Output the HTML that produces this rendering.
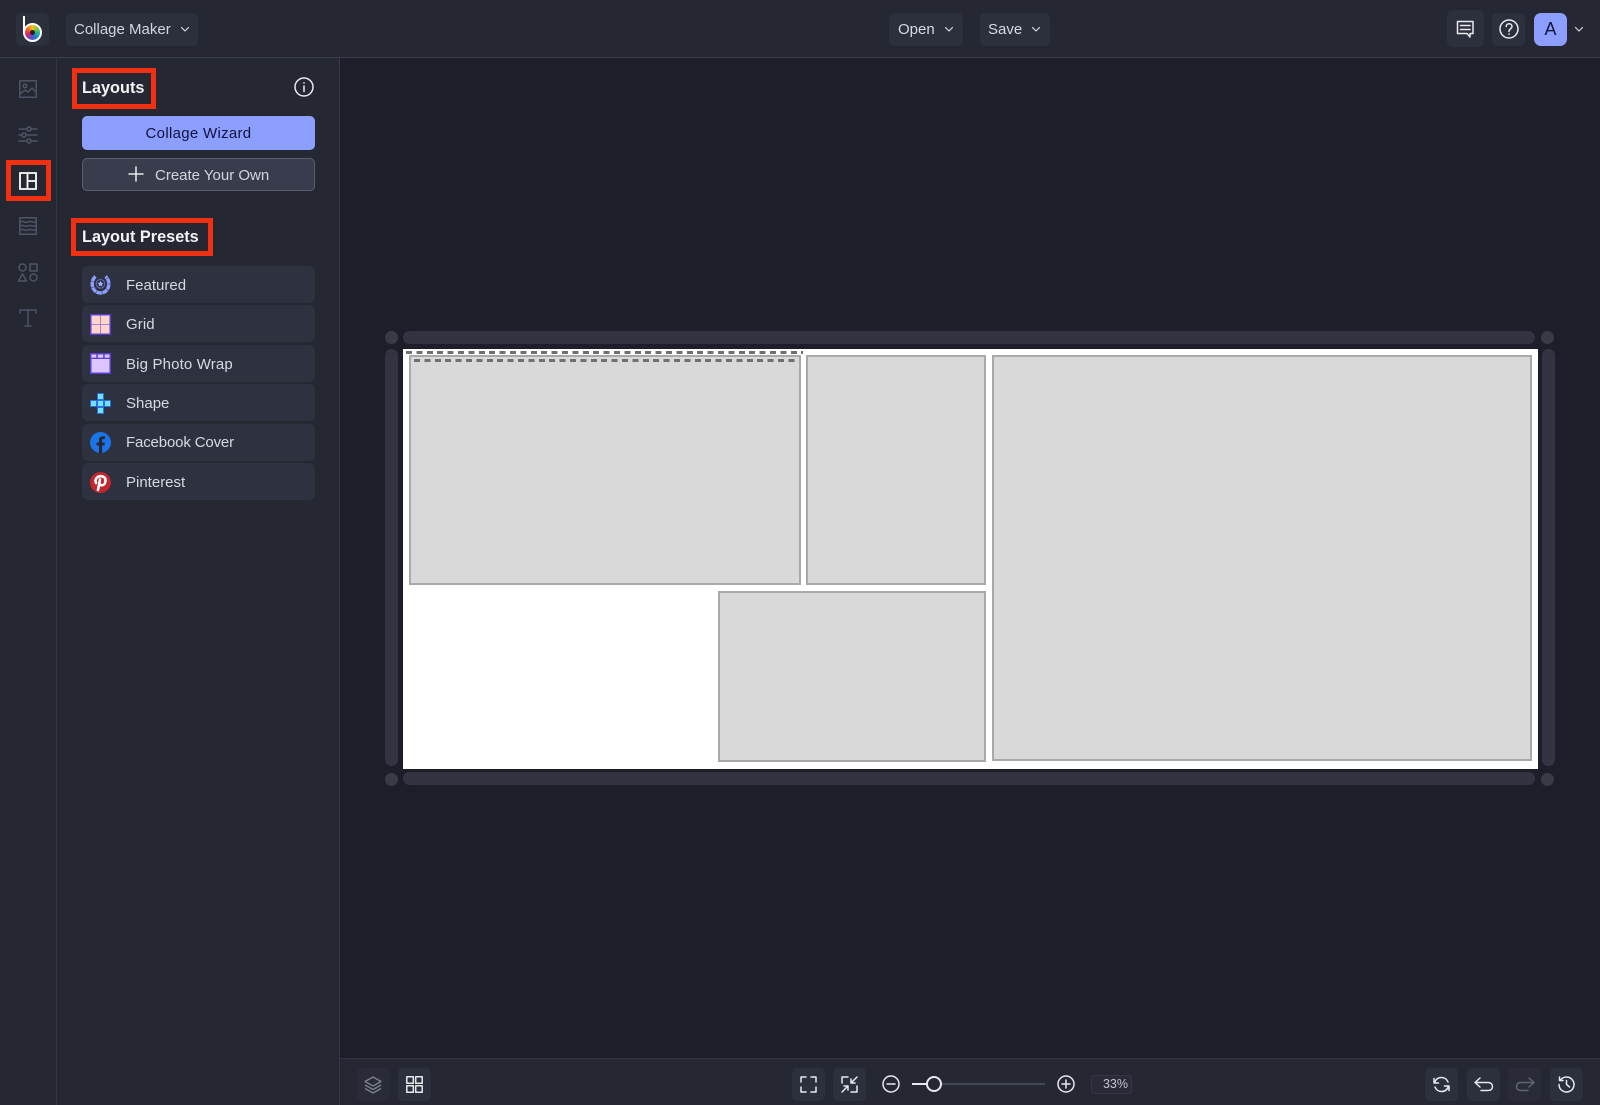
<!DOCTYPE html>
<html lang="en"><head><meta charset="utf-8"><title>Collage Maker</title>
<style>
*{box-sizing:border-box}
html,body{margin:0;padding:0;width:1600px;height:1105px;overflow:hidden;background:#1d1e29;font-family:"Liberation Sans",sans-serif;color:#d7d9e2}
.a{position:absolute}
.btn{position:absolute;background:#2c2f3c;border-radius:5px}
.t{position:absolute;white-space:nowrap;font-size:15px;line-height:20px;margin-top:1px}
.h{position:absolute;white-space:nowrap;font-size:16.3px;font-weight:700;line-height:22px;color:#f2f3f7}
.red{position:absolute;border:5px solid #f03010}
.row{position:absolute;left:82px;width:233px;height:37px;background:#2e313f;border-radius:6px}
.box{position:absolute;background:#d9d9d9;border:2px solid #a9a9a9}
.bar{position:absolute;background:#323541;border-radius:7px}
.dot{position:absolute;width:13px;height:13px;border-radius:50%;background:#383a45}
svg{position:absolute;overflow:visible}
.ic{fill:none;stroke:#4f5366;stroke-width:1.5;stroke-linecap:round;stroke-linejoin:round}
.w{fill:none;stroke:#e8e9ee;stroke-width:1.5;stroke-linecap:round;stroke-linejoin:round}
.ch{fill:none;stroke:#d7d9e2;stroke-width:1.2;stroke-linecap:round;stroke-linejoin:round}
.dash{position:absolute;height:3px;background:repeating-linear-gradient(90deg,#707070 0 6px,transparent 6px 10.4px)}
</style></head><body>

<!-- header -->
<div class="a" style="left:0;top:0;width:1600px;height:58px;background:#252833;border-bottom:1px solid #3a3d4a"></div>
<!-- rail + panel -->
<div class="a" style="left:0;top:58px;width:340px;height:1047px;background:#252833;border-right:1px solid #343743"></div>
<div class="a" style="left:56px;top:58px;width:1px;height:1047px;background:#343743"></div>
<!-- bottom bar -->
<div class="a" style="left:340px;top:1058px;width:1260px;height:47px;background:#252833;border-top:1px solid #343743"></div>

<!-- logo -->
<div class="btn" style="left:16px;top:13px;width:33px;height:33px"></div>
<div class="a" style="left:23px;top:16px;width:2px;height:17px;background:#fff"></div>
<div class="a" style="left:23px;top:23px;width:19px;height:19px;border-radius:50%;background:conic-gradient(#f5c518,#7ac143,#1fa8a0,#2a6fd6,#7b3fb5,#e0245e,#f26a21,#f5c518);border:2px solid #fff"></div>
<div class="a" style="left:30px;top:30px;width:5px;height:5px;border-radius:50%;background:#222"></div>

<div class="btn" style="left:66px;top:13px;width:132px;height:33px"></div>
<div class="t" style="left:74px;top:19px;color:#d3d5de">Collage Maker</div>
<svg style="left:180px;top:26px" width="10" height="7" viewBox="0 0 10 7"><path class="ch" d="M1.500 1.500L5 5l3.500-3.500"/></svg>

<div class="btn" style="left:889px;top:13px;width:74px;height:33px"></div>
<div class="t" style="left:898px;top:19px">Open</div>
<svg style="left:944px;top:26px" width="10" height="7" viewBox="0 0 10 7"><path class="ch" d="M1.500 1.500L5 5l3.500-3.500"/></svg>
<div class="btn" style="left:980px;top:13px;width:70px;height:33px"></div>
<div class="t" style="left:988px;top:19px">Save</div>
<svg style="left:1031px;top:26px" width="10" height="7" viewBox="0 0 10 7"><path class="ch" d="M1.500 1.500L5 5l3.500-3.500"/></svg>

<div class="btn" style="left:1447px;top:10px;width:37px;height:37px"></div>
<svg style="left:1456px;top:20px" width="19" height="19" viewBox="0 0 19 19"><path class="w" d="M1.500 1.500h15.500v12h-3v3.500l-3-3.500h-9.500zM4.500 5.500h9.500M4.500 9.500h9.500"/></svg>
<div class="btn" style="left:1492px;top:13px;width:33px;height:33px"></div>
<svg style="left:1499px;top:19px" width="20" height="20" viewBox="0 0 20 20"><circle class="w" cx="10" cy="10" r="9"/><path class="w" d="M7.200 7.500c0-3.600 5.800-3.600 5.800 0 0 2.500-3 2.300-3 5M10 15v.2"/></svg>
<div class="a" style="left:1534px;top:13px;width:33px;height:33px;background:#8c9eff;border-radius:7px"></div>
<div class="t" style="left:1534px;top:17px;width:33px;text-align:center;font-size:18px;line-height:22px;color:#14163a">A</div>
<svg style="left:1574px;top:26px" width="10" height="7" viewBox="0 0 10 7"><path class="ch" d="M1.500 1.500L5 5l3.500-3.500"/></svg>

<!-- rail icons -->
<svg style="left:19px;top:80px" width="18" height="18" viewBox="0 0 18 18"><rect class="ic" x=".8" y=".8" width="16.4" height="16.4"/><circle class="ic" cx="6" cy="6" r="1.800"/><path class="ic" d="M1 14l5-4 3 2 4-4 4 4"/></svg>
<svg style="left:19px;top:126px" width="18" height="18" viewBox="0 0 18 18"><path class="ic" d="M0 3h8M12 3h6M0 9h3M7 9h11M0 15h8M12 15h6"/><circle class="ic" cx="10" cy="3" r="2"/><circle class="ic" cx="5" cy="9" r="2"/><circle class="ic" cx="10" cy="15" r="2"/></svg>
<svg style="left:19px;top:172px" width="18" height="18" viewBox="0 0 18 18"><path fill="none" stroke="#fff" stroke-width="1.800" d="M1 1h16v16H1zM8.500 1v16M8.500 9H17"/></svg>
<svg style="left:19px;top:217px" width="18" height="18" viewBox="0 0 18 18"><rect class="ic" x=".8" y=".8" width="16.4" height="16.4"/><path class="ic" d="M1 5q2-1.200 4-.2t4 .2 4-.2 4 .2M1 9q2-1.200 4-.2t4 .2 4-.2 4 .2M1 13q2-1.200 4-.2t4 .2 4-.2 4 .2"/></svg>
<svg style="left:18px;top:263px" width="20" height="19" viewBox="0 0 20 19"><circle class="ic" cx="4.500" cy="4.500" r="3.500"/><rect class="ic" x="12" y="1" width="7" height="7"/><path class="ic" d="M4.500 11l4 7h-8z"/><circle class="ic" cx="15.500" cy="14.500" r="3.500"/></svg>
<svg style="left:19px;top:309px" width="18" height="18" viewBox="0 0 18 18"><path class="ic" d="M1 4V1h16v3M9 1v16M6 17h6"/></svg>

<div class="red" style="left:6px;top:160px;width:45px;height:41px"></div>

<!-- panel -->
<div class="red" style="left:72px;top:68px;width:84px;height:41px"></div>
<div class="h" style="left:82px;top:77px">Layouts</div>
<svg style="left:294px;top:77px" width="20" height="20" viewBox="0 0 20 20"><circle class="w" cx="10" cy="10" r="9"/><path class="w" d="M10 9v5.500M10 5.800v.2"/></svg>

<div class="a" style="left:82px;top:116px;width:233px;height:34px;background:#8c9eff;border-radius:5px"></div>
<div class="t" style="left:82px;top:123px;width:233px;text-align:center;color:#11133a;letter-spacing:.3px">Collage Wizard</div>
<div class="a" style="left:82px;top:158px;width:233px;height:33px;background:#393c4c;border:1px solid #5a5e72;border-radius:5px"></div>
<svg style="left:129px;top:167px" width="14" height="14" viewBox="0 0 14 14"><path class="w" d="M7 0v14M0 7h14"/></svg>
<div class="t" style="left:155px;top:165px;color:#d3d5de">Create Your Own</div>

<div class="red" style="left:71px;top:218px;width:142px;height:38px"></div>
<div class="h" style="left:82px;top:226px">Layout Presets</div>

<div class="row" style="top:266px"></div>
<div class="row" style="top:305px"></div>
<div class="row" style="top:345px"></div>
<div class="row" style="top:384px"></div>
<div class="row" style="top:424px"></div>
<div class="row" style="top:463px"></div>
<div class="t" style="left:126px;top:275px">Featured</div>
<div class="t" style="left:126px;top:314px;letter-spacing:.1px">Grid</div>
<div class="t" style="left:126px;top:354px;letter-spacing:.15px">Big Photo Wrap</div>
<div class="t" style="left:126px;top:393px">Shape</div>
<div class="t" style="left:126px;top:432px;letter-spacing:-.15px">Facebook Cover</div>
<div class="t" style="left:126px;top:472px">Pinterest</div>

<!-- featured -->
<svg style="left:90px;top:274px" width="21" height="21" viewBox="0 0 21 21"><path fill="none" stroke="#8c9eff" stroke-width="3.400" stroke-dasharray="5.500 .5" d="M5.500 2.500C1 6 .8 14.500 6.500 18c2.500 1.300 5.500 1.300 8 0 5.700-3.500 5.500-12 1-15.500"/><circle cx="10.500" cy="9.800" r="4.300" fill="none" stroke="#5f6cc8" stroke-width="1"/><path fill="#a8b5ff" d="M10.500 6.800l.9 2 2.100.2-1.600 1.400.5 2.100-1.900-1.100-1.900 1.100.5-2.100-1.600-1.400 2.100-.2z"/></svg>
<!-- grid -->
<svg style="left:90px;top:314px" width="21" height="21" viewBox="0 0 21 21"><rect width="21" height="21" fill="#5a3fd0"/><rect x="1.500" y="1.500" width="18" height="18" fill="#a985cf"/><rect x="1.500" y="1.500" width="8.500" height="8.500" fill="#ffd5cc"/><rect x="11" y="1.500" width="8.500" height="8.500" fill="#ffd5cc"/><rect x="1.500" y="11" width="8.500" height="8.500" fill="#ffd5cc"/><rect x="11" y="11" width="8.500" height="8.500" fill="#ffd5cc"/></svg>
<!-- big photo -->
<svg style="left:90px;top:353px" width="21" height="21" viewBox="0 0 21 21"><rect width="21" height="21" fill="#5a3fd0"/><rect x="1.500" y="6" width="18" height="13.500" fill="#dcc6ff"/><rect x="1.500" y="1.500" width="4.800" height="3.200" fill="#dcc6ff"/><rect x="7.800" y="1.500" width="5.400" height="3.200" fill="#dcc6ff"/><rect x="14.700" y="1.500" width="4.800" height="3.200" fill="#dcc6ff"/></svg>
<!-- shape -->
<svg style="left:90px;top:393px" width="21" height="21" viewBox="0 0 21 21"><path fill="#2b6fe0" d="M7 0h7v7h7v7h-7v7H7v-7H0V7h7z"/><g fill="#6fe3ff"><rect x="8" y="1" width="5" height="5"/><rect x="1" y="8" width="5" height="5"/><rect x="8" y="8" width="5" height="5"/><rect x="15" y="8" width="5" height="5"/><rect x="8" y="15" width="5" height="5"/></g></svg>
<!-- facebook -->
<svg style="left:90px;top:432px" width="21" height="21" viewBox="0 0 21 21"><circle cx="10.500" cy="10.500" r="10.500" fill="#1b74e8"/><path fill="#252833" d="M9 21v-7.500H6.500v-3H9V8.300C9 5.700 10.500 4.300 12.900 4.300c1 0 2 .2 2 .2v2.500h-1.200c-1.200 0-1.600.8-1.600 1.500v2h2.800l-.5 3h-2.300V21z"/></svg>
<!-- pinterest -->
<svg style="left:90px;top:472px" width="21" height="21" viewBox="0 0 21 21"><circle cx="10.500" cy="10.500" r="10.500" fill="#c4262e"/><path fill="none" stroke="#fff" stroke-width="2.600" stroke-linecap="round" d="M6 11C4.500 7.500 7 4.200 10.800 4.200c3.400 0 5 2.300 4.700 4.800-.3 2.800-2 4.500-4 4.300-1.200-.1-1.800-1-1.800-1.800M10 7.500L8 18"/></svg>

<!-- canvas scrollbars -->
<div class="bar" style="left:403px;top:331px;width:1132px;height:13px"></div>
<div class="bar" style="left:403px;top:772px;width:1132px;height:13px"></div>
<div class="bar" style="left:385px;top:349px;width:13px;height:417px"></div>
<div class="bar" style="left:1542px;top:349px;width:13px;height:417px"></div>
<div class="dot" style="left:385px;top:331px"></div>
<div class="dot" style="left:1541px;top:331px"></div>
<div class="dot" style="left:385px;top:773px"></div>
<div class="dot" style="left:1541px;top:773px"></div>

<!-- canvas -->
<div class="a" style="left:403px;top:349px;width:1135px;height:420px;background:#fff"></div>
<div class="box" style="left:409px;top:355px;width:392px;height:230px"></div>
<div class="box" style="left:806px;top:355px;width:180px;height:230px"></div>
<div class="box" style="left:718px;top:591px;width:268px;height:171px"></div>
<div class="box" style="left:992px;top:355px;width:540px;height:406px"></div>
<div class="dash" style="left:406px;top:351px;width:397px"></div>
<div class="dash" style="left:414px;top:359px;width:381px"></div>

<!-- bottom toolbar -->
<div class="btn" style="left:357px;top:1068px;width:33px;height:33px;background:#292c38"></div>
<svg style="left:364px;top:1076px" width="18" height="18" viewBox="0 0 18 18"><path fill="none" stroke="#7d808c" stroke-width="1.300" stroke-linejoin="round" d="M9 1l8 4.500-8 4.500-8-4.500zM1 9l8 4.500L17 9M1 12.500L9 17l8-4.500"/></svg>
<div class="btn" style="left:398px;top:1068px;width:33px;height:33px"></div>
<svg style="left:406px;top:1076px" width="17" height="17" viewBox="0 0 17 17"><g class="w"><rect x=".8" y=".8" width="6.500" height="6.500"/><rect x="9.700" y=".8" width="6.500" height="6.500"/><rect x=".8" y="9.700" width="6.500" height="6.500"/><rect x="9.700" y="9.700" width="6.500" height="6.500"/></g></svg>

<div class="btn" style="left:792px;top:1068px;width:33px;height:33px"></div>
<svg style="left:800px;top:1076px" width="17" height="17" viewBox="0 0 17 17"><path class="w" stroke-linecap="butt" d="M1 6V1h5M11 1h5v5M1 11v5h5M11 16h5v-5"/></svg>
<div class="btn" style="left:833px;top:1068px;width:33px;height:33px"></div>
<svg style="left:841px;top:1076px" width="17" height="17" viewBox="0 0 17 17"><path class="w" d="M1 7V1h6M16 10v6h-6M16 1l-6 6M10 3v4h4M1 16l6-6M3 10h4v4"/></svg>

<svg style="left:882px;top:1075px" width="18" height="18" viewBox="0 0 18 18"><circle class="w" cx="9" cy="9" r="8"/><path class="w" d="M5 9h8"/></svg>
<div class="a" style="left:912px;top:1083px;width:133px;height:2px;background:#444756"></div>
<div class="a" style="left:912px;top:1083px;width:22px;height:2px;background:#e8e9ee"></div>
<div class="a" style="left:926px;top:1076px;width:16px;height:16px;border-radius:50%;background:#252833;border:2px solid #e8e9ee"></div>
<svg style="left:1057px;top:1075px" width="18" height="18" viewBox="0 0 18 18"><circle class="w" cx="9" cy="9" r="8"/><path class="w" d="M5 9h8M9 5v8"/></svg>
<div class="a" style="left:1091px;top:1075px;width:41px;height:19px;background:#292c38;border:1px solid #343743;border-radius:3px"></div>
<div class="t" style="left:1091px;top:1075px;width:41px;height:19px;line-height:19px;text-align:right;padding-right:4px;font-size:12.5px;color:#c3c5cf;margin-top:0">33%</div>

<div class="btn" style="left:1425px;top:1068px;width:33px;height:33px"></div>
<svg style="left:1433px;top:1076px" width="17" height="17" viewBox="0 0 17 17"><path class="w" d="M1.500 7C2.500 3.500 5 1.500 8.500 1.500c3 0 5.500 1.800 6.500 4.500M15.500 10c-1 3.500-3.500 5.500-7 5.500-3 0-5.500-1.800-6.500-4.500M1 2.500V7h4.500M16 14.500V10h-4.500"/></svg>
<div class="btn" style="left:1467px;top:1068px;width:33px;height:33px"></div>
<svg style="left:1474px;top:1077px" width="20" height="15" viewBox="0 0 20 15"><path class="w" d="M6 1L1 5.500 6 10M1 5.500h13c3 0 4.500 1.800 4.500 4s-1.500 4-4.500 4H7"/></svg>
<div class="btn" style="left:1508px;top:1068px;width:33px;height:33px;background:#292c38"></div>
<svg style="left:1515px;top:1077px" width="20" height="15" viewBox="0 0 20 15"><path fill="none" stroke="#5f626f" stroke-width="1.500" stroke-linecap="round" stroke-linejoin="round" d="M14 1l5 4.500L14 10M19 5.500H6c-3 0-4.500 1.800-4.500 4s1.500 4 4.500 4h7"/></svg>
<div class="btn" style="left:1550px;top:1068px;width:33px;height:33px"></div>
<svg style="left:1558px;top:1076px" width="17" height="17" viewBox="0 0 17 17"><path class="w" d="M2.500 4A7.500 7.500 0 1 1 1 8.500M1.500 1v3.500H5M8.500 4.500v4l3 2.500"/></svg>

</body></html>
